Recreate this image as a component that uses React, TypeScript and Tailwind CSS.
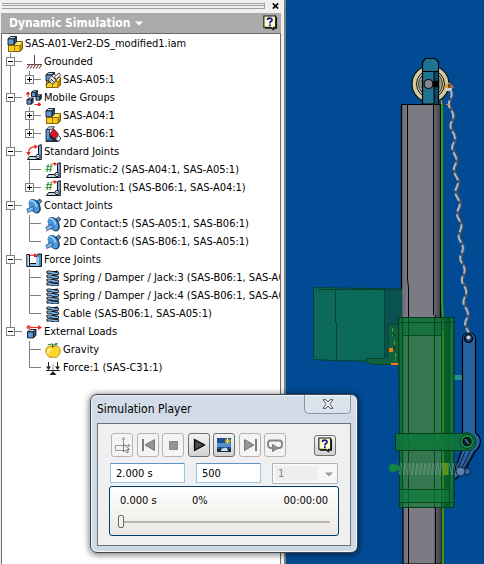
import { useState } from "react";
import type { ReactNode } from "react";
import clsx from "clsx";

const OUTLINE = "#10131c";

const Icon = ({ children }: { children: ReactNode }) => (
    <svg viewBox="0 0 16 16" className="w-4 h-4 shrink-0" aria-hidden="true">
        {children}
    </svg>
);

const Cube = ({ x, y, s, front, top, side }: { x: number; y: number; s: number; front: string; top: string; side: string }) => {
    const d = s * 0.4;
    return (
        <g stroke={OUTLINE} strokeWidth="0.9" strokeLinejoin="round">
            <path d={`M${x} ${y + d}l${d} ${-d}h${s}l${-d} ${d}z`} fill={top} />
            <path d={`M${x + s} ${y + d}l${d} ${-d}v${s}l${-d} ${d}z`} fill={side} />
            <path d={`M${x} ${y + d}h${s}v${s}h${-s}z`} fill={front} />
        </g>
    );
};

const BlueCube = ({ x, y, s }: { x: number; y: number; s: number }) => (
    <Cube x={x} y={y} s={s} front="#5b9bd5" top="#b8daf5" side="#2b6098" />
);

const PartShape = () => (
    <>
        <BlueCube x={1} y={0.5} s={6} />
        <path d="M7.5 8 10 5.500H15.500V13L13 15.500H1.500V9.500H7z" fill="#c99700" stroke="#4a3800" strokeWidth="0.8" />
        <path d="M1.500 9.500H13V15.500H1.500z" fill="#f8cc20" stroke="#7a5c00" strokeWidth="0.8" />
        <path d="M7.500 9 10 6H15L13 9z" fill="#ffe87a" />
        <path d="M7.500 9v6.500" stroke="#8a6a00" strokeWidth="0.9" />
    </>
);

const PartIcon = () => (
    <Icon>
        <PartShape />
    </Icon>
);

const GroundedPartIcon = () => (
    <Icon>
        <PartShape />
        <path d="M4.500 5.500 9 2l4.500 3.500L8 12 3.500 9.500z" fill="#f4f4f4" stroke="#333" strokeWidth="0.900" />
        <path d="M.5 13 6.500 8M7 4l4.500 5M5.500 6.500l4 4" stroke="#333" strokeWidth="1" fill="none" />
        <path d="M9.500 5l4.500-4 1.500 2-4.500 4.500z" fill="#fff" stroke="#333" strokeWidth="0.900" />
    </Icon>
);

const GroundIcon = () => (
    <Icon>
        <path d="M8.500 1v9M1 10.500h15" stroke="#6e4545" strokeWidth="1" fill="none" />
        <path d="M3.500 11 1 14.500M6.500 11 4 14.500M9.500 11 7 14.500M12.500 11 10 14.500M15.500 11 13 14.500" stroke="#6e4545" strokeWidth="1.100" />
    </Icon>
);

const MobileIcon = () => (
    <Icon>
        <BlueCube x={5.5} y={0.7} s={4.2} />
        <BlueCube x={10} y={4.8} s={3.8} />
        <BlueCube x={1} y={8} s={4.4} />
        <path d="M2 7V2.500M.3 4 2 2l1.700 2zM8.500 14.500H14M12.500 12.800l2.500 1.700-2.500 1.500z" stroke="#e81c1c" strokeWidth="1" fill="#e81c1c" />
    </Icon>
);

const MobilePartIcon = () => (
    <Icon>
        <path d="M1 3.500V15.500H13L10 12 4.500 8.500V3.500z" fill="#182a40" stroke={OUTLINE} strokeWidth="0.800" />
        <path d="M1.500 3.500H4.300V12.500L1.500 14.500z" fill="#5b9bd5" />
        <path d="M1.500 3.300 4 .8H9.500L7 3.300z" fill="#e4eef6" stroke={OUTLINE} strokeWidth="0.800" />
        <path d="M8.500 2.500 13.500 8 9.500 13 4.500 8.500z" fill="#e0141c" stroke={OUTLINE} strokeWidth="0.600" />
        <path d="M10.500 13 13.500 9.500 15.500 11.500V13.500L13 15.500z" fill="#e4eef6" stroke={OUTLINE} strokeWidth="0.800" />
        <path d="M2 14.500 5 11.500 8 14.500z" fill="#3d78b0" />
    </Icon>
);

const Bracket = () => (
    <>
        <path d="M12.500 1.500 15.300.7v14.800H12.500z" fill="#7fb2dc" stroke={OUTLINE} strokeWidth="1" />
        <path d="M3.500 12.500H10l3 3H1.500z" fill="#b9d6ec" stroke={OUTLINE} strokeWidth="1" />
        <circle cx="12" cy="12.5" r="2.1" fill="#dfe9f2" stroke={OUTLINE} />
        <circle cx="12" cy="12.5" r="0.6" fill={OUTLINE} />
    </>
);

const StandardIcon = () => (
    <Icon>
        <Bracket />
        <path d="M2.500 9.500C2.500 5 5 2.700 9.500 2.700" fill="none" stroke="#ee2a20" strokeWidth="1.200" />
        <path d="M8.500.3 12 2.700 8.500 5zM.2 8 2.500 12l2.300-4z" fill="#ee2a20" />
    </Icon>
);

const JointIcon = () => (
    <Icon>
        <Bracket />
        <path d="M3.300 2 2 10M6.300 2 5 10M1 4.500h6.500M.5 7.500H7" stroke="#3c9a3c" strokeWidth="1.200" />
        <path d="M7 1.800h3" stroke="#ee2a20" strokeWidth="1.100" />
        <path d="M9 0 12.300 2 9 4z" fill="#ee2a20" />
    </Icon>
);

const ContactIcon = () => (
    <Icon>
        <path d="M9.500 4.500 13.500 1l2.300 2-3.300 4z" fill="#4a8fcd" stroke={OUTLINE} strokeWidth="0.700" />
        <ellipse cx="8.8" cy="8.2" rx="5.200" ry="7.800" transform="rotate(-32 8.8 8.2)" fill="#17395f" />
        <ellipse cx="8" cy="7.9" rx="4.400" ry="7.200" transform="rotate(-32 8 7.9)" fill="#4a97dc" />
        <path d="M4.500 2.500C7 2.500 9.500 5 10.500 8" stroke="#a8d4f8" strokeWidth="1.600" fill="none" strokeLinecap="round" />
        <path d="M6.500 8.500 .8 11.300l1.500 3 6-2.800z" fill="#7cbcf0" stroke="#1c4674" strokeWidth="0.800" />
        <path d="M1 14.500h1v1H1z" fill="#e820e8" />
    </Icon>
);

const ForceJointIcon = () => (
    <Icon>
        <path d="M.8 2.500h2.700v12H.8z" fill="#c6d9ea" stroke={OUTLINE} strokeWidth="1" />
        <path d="M9.500 4.500 12 2h3.500v12.500H10.500V4.500z" fill="#4e8dc4" stroke={OUTLINE} strokeWidth="1" />
        <path d="M3.500 11.500h7v3h-7z" fill="#8cb9dd" stroke={OUTLINE} strokeWidth="1" />
        <path d="M10 5h3v9h-3z" fill="#9cc8ea" />
        <path d="M4 3.300h5" stroke="#ee2a20" strokeWidth="1.200" />
        <path d="M8 .9 11.500 3.300 8 5.700z" fill="#ee2a20" />
    </Icon>
);

const COIL_FRONT = "M3 2.200C5 1 9 4.500 12.500 3.200M3 6.200C5 5 9 8.500 12.500 7.200M3 10.200C5 9 9 12.500 12.500 11.200M3 14C5 13 9 15.500 12.500 14.500";
const COIL_BACK = "M12.500 1.200 3 3M12.500 4.500 4 6M12.500 8.500 4 10M12.500 12.500 4 13.500";

const SpringIcon = () => (
    <Icon>
        <path d={COIL_BACK} stroke={OUTLINE} strokeWidth="1.300" fill="none" strokeLinecap="round" />
        <path d={COIL_FRONT} stroke={OUTLINE} strokeWidth="3.200" fill="none" strokeLinecap="round" />
        <path d={COIL_FRONT} stroke="#78b4e6" strokeWidth="1.600" fill="none" strokeLinecap="round" />
    </Icon>
);

const LoadIcon = () => (
    <Icon>
        <BlueCube x={1.5} y={5.5} s={6} />
        <path d="M3 3.500h10" stroke="#ee2a20" strokeWidth="1.200" />
        <path d="M12 1 16 3.500 12 6z" fill="#ee2a20" />
        <circle cx="2.6" cy="3.2" r="2.1" fill="#f05048" />
    </Icon>
);

const AppleIcon = () => (
    <Icon>
        <path d="M8 5C4 2.500.7 5 .8 9c.1 3.700 3.200 6.500 5.200 6.500 1 0 1.300-.5 2-.5s1.300.5 2.300.5c2 0 5-3 4.900-6.700C15.100 5 12 2.500 8 5z" fill="#fdd62a" stroke="#a87c00" strokeWidth="0.800" />
        <path d="M5.500 7.500c-2 0-3 1.500-2.500 3.500" stroke="#fff7b8" strokeWidth="1.700" fill="none" strokeLinecap="round" />
        <path d="M8 5.500C8 3.500 7.500 2.500 6.500 1.500" stroke="#4b3510" strokeWidth="1.100" fill="none" />
        <path d="M8 3.500C9 1 11.500.5 13 1.500 11.500 3.700 9.500 4 8 3.500zM6.500 2.500C5 1.200 3 1.500 2.500 2.500 4 3.500 5.500 3.500 6.500 2.500z" fill="#2f9a3c" />
    </Icon>
);

const ForceIcon = () => (
    <Icon>
        <path d="M3.500 2v6M12.500 2v6M1 10.500h14" stroke="#222" strokeWidth="1" />
        <path d="M1 6.500h5L3.500 10zM10 6.500h5L12.500 10zM8 11l3.500 4h-7z" fill="#222" />
        <path d="M8 4v6" stroke="#999" strokeWidth="1" />
    </Icon>
);

const HelpGlyph = () => (
    <svg viewBox="0 0 16 17" className="w-4 h-4" aria-hidden="true">
        <path d="M2.500 2.500h13v12h-3V16.500L9.500 14.500h-7z" fill="#111" />
        <path d="M1.500 1h12.500v12h-2.500v2.200L8.700 13H1.500z" fill="#fffde0" stroke="#111" strokeWidth="1.200" />
        <path d="M3 3h10v9H3z" fill="none" stroke="#f6ee50" strokeWidth="1" strokeDasharray="1 1" />
        <path d="M5.300 5.300C5.300 2.800 10.200 2.800 10.200 5.200 10.200 7 7.800 6.700 7.800 9" stroke="#10108c" strokeWidth="1.800" fill="none" />
        <path d="M6.900 10h1.900v1.800H6.900z" fill="#10108c" />
    </svg>
);

type Leaf = { label: string; icon: ReactNode; expandable?: boolean };
type Group = { label: string; icon: ReactNode; items: Leaf[] };

const groups: Group[] = [
    {
        label: "Grounded",
        icon: <GroundIcon />,
        items: [{ label: "SAS-A05:1", icon: <GroundedPartIcon />, expandable: true }],
    },
    {
        label: "Mobile Groups",
        icon: <MobileIcon />,
        items: [
            { label: "SAS-A04:1", icon: <PartIcon />, expandable: true },
            { label: "SAS-B06:1", icon: <MobilePartIcon />, expandable: true },
        ],
    },
    {
        label: "Standard Joints",
        icon: <StandardIcon />,
        items: [
            { label: "Prismatic:2 (SAS-A04:1, SAS-A05:1)", icon: <JointIcon /> },
            { label: "Revolution:1 (SAS-B06:1, SAS-A04:1)", icon: <JointIcon />, expandable: true },
        ],
    },
    {
        label: "Contact Joints",
        icon: <ContactIcon />,
        items: [
            { label: "2D Contact:5 (SAS-A05:1, SAS-B06:1)", icon: <ContactIcon /> },
            { label: "2D Contact:6 (SAS-B06:1, SAS-A05:1)", icon: <ContactIcon /> },
        ],
    },
    {
        label: "Force Joints",
        icon: <ForceJointIcon />,
        items: [
            { label: "Spring / Damper / Jack:3 (SAS-B06:1, SAS-A05:1)", icon: <SpringIcon /> },
            { label: "Spring / Damper / Jack:4 (SAS-B06:1, SAS-A05:1)", icon: <SpringIcon /> },
            { label: "Cable (SAS-B06:1, SAS-A05:1)", icon: <SpringIcon /> },
        ],
    },
    {
        label: "External Loads",
        icon: <LoadIcon />,
        items: [
            { label: "Gravity", icon: <AppleIcon /> },
            { label: "Force:1 (SAS-C31:1)", icon: <ForceIcon /> },
        ],
    },
];

/* vertical rule of the outer level, drawn beside nested rows */
const Rail = ({ visible }: { visible: boolean }) => (
    <span className="w-[19px] h-full shrink-0 flex pl-[8px]">
        {visible && <span className="w-px h-full bg-[#808080]" />}
    </span>
);

const Branch = ({ last, sign, label, onClick }: { last: boolean; sign?: "+" | "-"; label: string; onClick?: () => void }) => (
    <span className="w-6 h-full shrink-0 grid items-center">
        <svg viewBox="0 0 24 18" className="w-full h-full col-start-1 row-start-1" shapeRendering="crispEdges" aria-hidden="true">
            <path d={`M8.500 0V${last ? 9 : 18}M8 8.500H20`} stroke="#808080" fill="none" />
        </svg>
        {sign && (
            <button
                type="button"
                aria-label={`${sign === "+" ? "Expand" : "Collapse"} ${label}`}
                onClick={onClick}
                className="col-start-1 row-start-1 ml-1 mb-px w-[9px] h-[9px] bg-white border border-[#808080]"
            >
                <svg viewBox="0 0 7 7" className="w-[7px] h-[7px]" shapeRendering="crispEdges" aria-hidden="true">
                    <path d={sign === "+" ? "M1 3.500h5M3.500 1v5" : "M1 3.500h5"} stroke="#000" />
                </svg>
            </button>
        )}
    </span>
);

const ModelTree = () => {
    const [closed, setClosed] = useState<string[]>([]);

    const toggle = (label: string) =>
        setClosed((prev) => (prev.includes(label) ? prev.filter((l) => l !== label) : [...prev, label]));

    return (
        <div className="flex-1 pt-px bg-white border border-b-0 border-[#6b6b6b] overflow-hidden whitespace-nowrap">
            <div className="flex items-center h-[18px] pl-[5px] gap-[2px]">
                <PartIcon />
                <span>SAS-A01-Ver2-DS_modified1.iam</span>
            </div>
            <ul>
                {groups.map((group, gi) => {
                    const lastGroup = gi === groups.length - 1;
                    const isOpen = !closed.includes(group.label);
                    return (
                        <li key={group.label}>
                            <div className="flex items-center h-[18px]">
                                <Branch
                                    last={lastGroup}
                                    sign={isOpen ? "-" : "+"}
                                    label={group.label}
                                    onClick={() => toggle(group.label)}
                                />
                                {group.icon}
                                <span className="pl-[2px]">{group.label}</span>
                            </div>
                            {isOpen && (
                                <ul>
                                    {group.items.map((item, i) => (
                                        <li key={item.label} className="flex items-center h-[18px]">
                                            <Rail visible={!lastGroup} />
                                            <Branch
                                                last={i === group.items.length - 1}
                                                sign={item.expandable ? "+" : undefined}
                                                label={item.label}
                                            />
                                            {item.icon}
                                            <span className="pl-[2px]">{item.label}</span>
                                        </li>
                                    ))}
                                </ul>
                            )}
                        </li>
                    );
                })}
            </ul>
        </div>
    );
};

const BrowserPanel = () => (
    <aside className="w-[286px] shrink-0 flex flex-col bg-[#f0f0f0] border-r-2 border-[#808080] pl-px pr-[3px]">
        <div className="flex items-center h-[13px] gap-1 pl-px pb-[2px]">
            <div className="flex-1 h-[6px] border-y border-r border-[#a0a0a0] flex items-center">
                <span className="w-full h-px bg-[#a0a0a0]" />
            </div>
            <button type="button" aria-label="Close panel" className="w-3 h-2 flex justify-center items-center">
                <svg viewBox="0 0 7 6" className="w-[7px] h-[6px]" aria-hidden="true">
                    <path d="M.8.5 6.200 5.500M6.200.5.8 5.500" stroke="#000" strokeWidth="1.700" />
                </svg>
            </button>
        </div>
        <div className="flex items-center justify-between h-5 bg-[#ababab] pl-2 pr-[3px]">
            <button type="button" className="flex items-center gap-[5px] text-white text-[12px] leading-5 font-bold">
                Dynamic Simulation
                <svg viewBox="0 0 8 5" className="w-2 h-[5px]" aria-hidden="true">
                    <path d="M0 .5h8L4 4.500z" fill="#fff" />
                </svg>
            </button>
            <button type="button" aria-label="Help">
                <HelpGlyph />
            </button>
        </div>
        <ModelTree />
    </aside>
);

/* the cable leans right on its way down to the lever */
const cablePoints = (shift: number) => {
    const pts: string[] = [];
    for (let y = 90; y <= 334; y += 2) {
        const t = (y - 90) / 244;
        const x = 449.5 + 18 * t + Math.sin((y / 22) * Math.PI * 2) * 1.8 + shift;
        pts.push(`${x.toFixed(1)},${y}`);
    }
    return pts.join(" ");
};

const springCoils = Array.from({ length: 15 }, (_, i) => 400 + i * 4);

const Viewport = () => (
    <main className="flex-1 min-w-0 bg-[#004b94] overflow-hidden">
        <svg viewBox="286 0 198 564" className="w-[198px] h-[564px]" role="img" aria-label="Lift mechanism">
            <defs>
                <linearGradient id="column" x1="0" x2="1" y1="0" y2="0">
                    <stop offset="0" stopColor="#6a6a72" />
                    <stop offset="0.15" stopColor="#7c7b83" />
                    <stop offset="0.78" stopColor="#7c7b83" />
                    <stop offset="0.8" stopColor="#62626a" />
                    <stop offset="0.92" stopColor="#4c4c54" />
                    <stop offset="1" stopColor="#2a2a30" />
                </linearGradient>
            </defs>

            {/* pulley */}
            <circle cx="430.5" cy="84" r="18.500" fill="#cfcaa2" stroke="#111" strokeWidth="1.200" />
            <circle cx="430.5" cy="84" r="14" fill="none" stroke="#111" />
            <circle cx="430.5" cy="84" r="12" fill="#a9a582" stroke="#111" strokeWidth="0.800" />
            <circle cx="430.5" cy="84" r="9.500" fill="#dcd8b4" stroke="#444" strokeWidth="0.700" />
            <path d="M422.500 104V62l3-3.500h10l3 3.500v42z" fill="#1f7391" stroke="#000" strokeWidth="1.200" />
            <path d="M434 72h4v32h-4z" fill="#0d4860" />
            <path d="M423 71.500h15M434 72v32" stroke="#000" />
            <circle cx="435.500" cy="84" r="3.500" fill="#000" />
            <circle cx="428.500" cy="84" r="4.500" fill="#85868e" stroke="#000" strokeWidth="1.200" />

            {/* column */}
            <path d="M401.500 104.500h39V320h2V564H403V320h-1.500z" fill="url(#column)" stroke="#000" strokeWidth="1.200" />
            <path d="M407.500 105v173l1 10v276M433.500 105v210M435.500 315v249" stroke="#000" fill="none" />
            <path d="M442 104v200l1 16v244" stroke="#2ea006" strokeWidth="2" fill="none" />

            {/* cable */}
            <polyline points={cablePoints(0.8)} fill="none" stroke="#4a5464" strokeWidth="2.800" />
            <polyline points={cablePoints(0)} fill="none" stroke="#b4b4bc" strokeWidth="2" strokeDasharray="8 3" />
            <path d="M441.500 100v4M446 104.500h3M444 87h9M445 87l4-4 4 4z" stroke="#f08010" strokeWidth="1.200" fill="none" />
            <path d="M445.500 88h7l-2 3h-4z" fill="#d0d0d4" />

            {/* counterweight box */}
            <path d="M313.500 287.500 385 289.500V357L366 361.500 313.500 359z" fill="#0c6a5a" />
            <path d="M385 289.500h17V357h-17z" fill="#0a5252" />
            <path d="M313.500 359.500V287.500L402 289M318 289.500h84M384.500 290v67M335.500 290v32l1 0v38M313.500 359.500 330 360.500 366 361M366 358.500h19" stroke="#06432a" fill="none" />
            <path d="M366 358.500h19l3-3V324.500h14V364.500H374L366 362.500z" fill="#0f5f40" stroke="#06432a" />
            <path d="M392.500 328v8M394.500 341v6M395.500 353v8" stroke="#39b800" strokeDasharray="4 2" />
            <path d="M391.500 333l3 3M394.500 346v4" stroke="#031" />
            <path d="M389 348h4v4h-4zM391 363h8v2h-8z" fill="#f47c00" />

            {/* lever arm */}
            <path d="M454 375h9v5h-9z" fill="#2a8f86" />
            <path d="M462.500 441V339c0-8 13-8 13 0v94c7 4 6 13 0 18l-11 20-9 8-3-2 9-26z" fill="#2a62a4" stroke="#000" strokeWidth="1.200" />
            <path d="M465 452l-7 16M475 450l-13 22M471 449l-11 23" stroke="#0a1c38" fill="none" />
            <circle cx="468.500" cy="338.500" r="4" fill="#1a3a66" stroke="#000" strokeWidth="1.200" />
            <circle cx="468.500" cy="337.500" r="2" fill="#c8ccd4" />

            {/* sleeve */}
            <path d="M398.500 317.500h55.500V507.500H399.500V410z" fill="#117239" fillOpacity="0.920" stroke="#033c1a" strokeWidth="1.200" />
            <path d="M403.500 335h38V507h-38z" fill="#35784f" />
            <path d="M444 318h5v189h-5z" fill="#0b5c2c" />
            <path d="M443 330v160" stroke="#2aa010" />
            <path d="M398.500 322.500H454M402 335.500h40M402.500 318v189M408.500 318v189M434.500 318v189M441.500 318v189M449.500 318v189" stroke="#064a22" fill="none" />
            <path d="M395.500 433.500H464c4-3 12 2 12 8s-5 10-11 9H395.500z" fill="#10763a" fillOpacity="0.900" stroke="#033c1a" />
            <path d="M400 489.500h49M400 502.500h54" stroke="#064a22" />
            <path d="M400 490h49v12h-49z" fill="#107c3c" fillOpacity="0.700" />
            <circle cx="467" cy="441.500" r="7" fill="#1c8a4c" stroke="#033c1a" />
            <circle cx="467" cy="441.500" r="4" fill="#0a2838" stroke="#000" strokeWidth="1.200" />
            <path d="M465 439l4 5" stroke="#8aa0b8" />

            {/* return spring */}
            {springCoils.map((x) => (
                <path key={x} d={`M${x} 475l-3-12M${x} 475l1-12`} stroke="#8fae9c" strokeOpacity="0.450" fill="none" />
            ))}
            <path d="M391 465.500h10v5h-10z" fill="#1c7a44" />
            <circle cx="393" cy="468" r="4" fill="#0f8844" />
            <path d="M443 463h5v12h-5z" fill="#6b9a14" fillOpacity="0.800" />
            <circle cx="467" cy="471.500" r="3.500" fill="#3868a0" stroke="#0a1c38" />
            <circle cx="460.500" cy="471.500" r="4.500" fill="#5c80ac" stroke="#0a1c38" />
        </svg>
    </main>
);

const playerActions = [
    {
        label: "Construction mode",
        disabled: true,
        art: (
            <>
                <path d="M2.500 9.500h8v5h-8zM10.500 9.500V2M10.500 9.500h6" stroke="#9a9a9a" fill="none" />
                <path d="M8.500 3.500 10.500 1l2 2.500zM15 7.500 17.500 9.500 15 11.500z" fill="#9a9a9a" />
                <path d="M10.500 8v8l2-2 1.500 3 1.500-1-1.500-2.500h2.500z" fill="#f4f4f4" stroke="#777" />
            </>
        ),
    },
    {
        label: "Rewind",
        disabled: true,
        art: (
            <>
                <path d="M3 3h2v12H3z" fill="#7c7c7c" />
                <path d="M15.500 3.500v11L6 9z" fill="#969696" stroke="#777" />
            </>
        ),
    },
    { label: "Stop", disabled: true, art: <path d="M5.500 5.500h8v8h-8z" fill="#969696" stroke="#868686" /> },
    { label: "Play", disabled: false, art: <path d="M4.500 3.500v11L14.500 9z" fill="#4a4a4a" stroke="#000" strokeWidth="1.300" /> },
    {
        label: "Deactivate screen refresh",
        disabled: false,
        art: (
            <>
                <path d="M2 2h14v14H2z" fill="#1d4f90" />
                <path d="M2 7h14v4H2z" fill="#4d8fd0" />
                <path d="M2 13h14v3H2z" fill="#1b2a40" />
                <path d="M6 15c0-3 2-2 3-3 1.500-1 4 0 4 3z" fill="#d8dde4" />
                <path d="M12.500 2v6M10 5h6M10.500 3l4 4M14.500 3l-4 4" stroke="#ffe030" strokeWidth="1" />
            </>
        ),
    },
    {
        label: "Go to end",
        disabled: true,
        art: (
            <>
                <path d="M3.500 3.500v11L13 9z" fill="#969696" stroke="#777" />
                <path d="M14 3h2v12h-2z" fill="#7c7c7c" />
            </>
        ),
    },
    {
        label: "Loop",
        disabled: true,
        art: (
            <>
                <path d="M6 12H4.500C1 12 1 4.500 4.500 4.500h9C17 4.500 17 12 13.500 12H12" stroke="#858585" strokeWidth="1.800" fill="none" />
                <path d="M6.500 8.500v7l6-3.500z" fill="#969696" stroke="#777" />
            </>
        ),
    },
];

const SimulationPlayer = () => {
    const [duration, setDuration] = useState("2.000 s");
    const [images, setImages] = useState("500");
    const [position, setPosition] = useState(0);

    return (
        <section
            aria-label="Simulation Player"
            className="absolute left-[90px] top-[394px] w-[268px] px-[6px] pb-[6px] rounded-[7px] border border-[#3c4450] bg-linear-to-b from-[#d3dce8] to-[#cddae6] shadow-[0_1px_6px_1px_rgba(0,0,0,0.5),inset_0_0_0_1px_rgba(255,255,255,0.7)]"
        >
            <header className="flex items-start justify-between h-7">
                <h2 className="text-[12px] leading-7 text-black">Simulation Player</h2>
                <button
                    type="button"
                    aria-label="Close"
                    className="w-[47px] h-[19px] flex items-center justify-center rounded-b-[5px] border border-t-0 border-[#8a96a6] bg-white/20"
                >
                    <svg viewBox="0 0 12 10" className="w-3 h-[10px]" aria-hidden="true">
                        <path d="M1 .7h3L6 3 8 .7h3L7.700 5 11 9.300H8L6 7 4 9.300H1L4.300 5z" fill="#fff" stroke="#4c5664" strokeWidth="1" />
                    </svg>
                </button>
            </header>

            <div className="border border-[#6b737e] bg-[#f0f0f0] pt-[9px] pb-[9px] px-3">
                <div className="flex items-center justify-between pl-px pr-[2px]">
                    <div className="flex justify-between w-[175px]">
                        {playerActions.map((action) => (
                            <button
                                key={action.label}
                                type="button"
                                aria-label={action.label}
                                disabled={action.disabled}
                                className={clsx(
                                    "w-[22px] h-6 flex items-center justify-center rounded-[3px] border",
                                    action.disabled
                                        ? "border-[#b4b4b4] bg-[#f4f4f4]"
                                        : "border-[#707070] bg-linear-to-b from-[#f4f4f4] to-[#d2d2d2]",
                                )}
                            >
                                <svg viewBox="0 0 18 18" className="w-[18px] h-[18px] shrink-0" aria-hidden="true">
                                    {action.art}
                                </svg>
                            </button>
                        ))}
                    </div>
                    <button
                        type="button"
                        aria-label="Player help"
                        className="w-[22px] h-[21px] flex items-center justify-center rounded-[3px] border border-[#707070] bg-linear-to-b from-[#f4f4f4] to-[#d2d2d2]"
                    >
                        <HelpGlyph />
                    </button>
                </div>

                <div className="flex items-start justify-between mt-[6px]">
                    <input
                        aria-label="Final time"
                        value={duration}
                        onChange={(e) => setDuration(e.target.value)}
                        className="w-[75px] h-5 px-[5px] border border-[#9cc4e4] border-t-[#5f94c4] bg-white rounded-[1px]"
                    />
                    <input
                        aria-label="Images"
                        value={images}
                        onChange={(e) => setImages(e.target.value)}
                        className="w-[65px] h-5 px-[5px] border border-[#9cc4e4] border-t-[#5f94c4] bg-white rounded-[1px]"
                    />
                    <div className="relative w-[66px] h-[21px] p-[2px] border border-[#b4b4b4] bg-[#f8f8f8] rounded-[1px]">
                        <select
                            aria-label="Filter"
                            disabled
                            className="appearance-none w-[43px] h-[15px] pl-[3px] leading-[15px] bg-[#eeeeee] text-[#838383] opacity-100 block"
                        >
                            <option>1</option>
                        </select>
                        <svg viewBox="0 0 8 5" className="absolute right-1 top-2 w-2 h-[5px]" aria-hidden="true">
                            <path d="M0 .5h8L4 4.500z" fill="#9a9a9a" />
                        </svg>
                    </div>
                </div>

                <div className="mt-[2px] -mx-px h-[50px] px-2 pt-[7px] rounded-[3px] border border-[#003c74] bg-linear-to-b from-white to-[#ece9e4]">
                    <div className="flex px-[2px] leading-[14px]">
                        <span className="w-[72px]">0.000 s</span>
                        <span className="flex-1">0%</span>
                        <span>00:00:00</span>
                    </div>
                    <input
                        type="range"
                        aria-label="Simulation position"
                        min={0}
                        max={100}
                        value={position}
                        onChange={(e) => setPosition(Number(e.target.value))}
                        className="block appearance-none w-full h-[14px] mt-[7px] bg-transparent [&::-webkit-slider-runnable-track]:h-[2px] [&::-webkit-slider-runnable-track]:bg-[#b4b4b4] [&::-webkit-slider-thumb]:appearance-none [&::-webkit-slider-thumb]:w-[6px] [&::-webkit-slider-thumb]:h-[13px] [&::-webkit-slider-thumb]:-mt-[6px] [&::-webkit-slider-thumb]:rounded-[2px] [&::-webkit-slider-thumb]:border [&::-webkit-slider-thumb]:border-[#666666] [&::-webkit-slider-thumb]:bg-[#f4f4f4]"
                    />
                </div>
            </div>
        </section>
    );
};

const App = () => (
    <div className="relative min-h-screen flex overflow-hidden text-black text-[11px] leading-[18px] font-['DejaVu_Sans_Condensed','DejaVu_Sans',sans-serif]">
        <BrowserPanel />
        <Viewport />
        <SimulationPlayer />
    </div>
);

export default App;
